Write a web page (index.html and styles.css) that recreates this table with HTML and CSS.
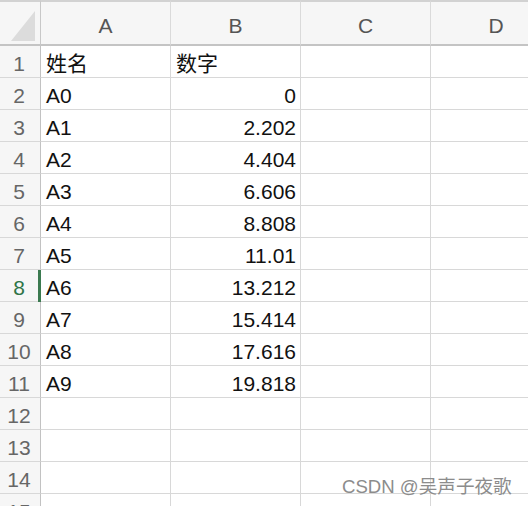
FILE: index.html
```html
<!DOCTYPE html>
<html lang="zh">
<head>
<meta charset="utf-8">
<link rel="stylesheet" href="styles.css">
</head>
<body>
<div class="sheet">
  <div class="corner"><svg width="40" height="44" viewBox="0 0 40 44"><polygon points="11,41 35,11 35,41" fill="#dcdcdc"/></svg></div>
  <div class="h">A</div><div class="h">B</div><div class="h">C</div><div class="h edge">D</div>

  <div class="r">1</div><div class="c">姓名</div><div class="c">数字</div><div class="c"></div><div class="c edge"></div>
  <div class="r">2</div><div class="c">A0</div><div class="c num">0</div><div class="c"></div><div class="c edge"></div>
  <div class="r">3</div><div class="c">A1</div><div class="c num">2.202</div><div class="c"></div><div class="c edge"></div>
  <div class="r">4</div><div class="c">A2</div><div class="c num">4.404</div><div class="c"></div><div class="c edge"></div>
  <div class="r">5</div><div class="c">A3</div><div class="c num">6.606</div><div class="c"></div><div class="c edge"></div>
  <div class="r">6</div><div class="c">A4</div><div class="c num">8.808</div><div class="c"></div><div class="c edge"></div>
  <div class="r">7</div><div class="c">A5</div><div class="c num">11.01</div><div class="c"></div><div class="c edge"></div>
  <div class="r sel">8</div><div class="c">A6</div><div class="c num">13.212</div><div class="c"></div><div class="c edge"></div>
  <div class="r">9</div><div class="c">A7</div><div class="c num">15.414</div><div class="c"></div><div class="c edge"></div>
  <div class="r">10</div><div class="c">A8</div><div class="c num">17.616</div><div class="c"></div><div class="c edge"></div>
  <div class="r">11</div><div class="c">A9</div><div class="c num">19.818</div><div class="c"></div><div class="c edge"></div>
  <div class="r">12</div><div class="c"></div><div class="c"></div><div class="c"></div><div class="c edge"></div>
  <div class="r">13</div><div class="c"></div><div class="c"></div><div class="c"></div><div class="c edge"></div>
  <div class="r">14</div><div class="c"></div><div class="c"></div><div class="c"></div><div class="c edge"></div>
  <div class="r">15</div><div class="c"></div><div class="c"></div><div class="c"></div><div class="c edge"></div>
</div>
<div class="watermark">CSDN @吴声子夜歌</div>
</body>
</html>
```

FILE: styles.css
```css
html, body {
  margin: 0;
  padding: 0;
  background: #ffffff;
}
body {
  width: 528px;
  height: 506px;
  overflow: hidden;
  position: relative;
  font-family: "Liberation Sans", "Noto Sans CJK SC", sans-serif;
}
.sheet {
  display: grid;
  width: 528px;
  grid-template-columns: 41px 130px 130px 130px 1fr;
  grid-template-rows: 46px;
  grid-auto-rows: 32px;
}
.corner, .h, .r, .c {
  box-sizing: border-box;
  display: flex;
  align-items: flex-end;
  font-size: 21px;
  line-height: 24px;
}
.corner {
  background: #f6f6f6;
  border-top: 2px solid #d2d2d2;
  border-bottom: 2px solid #c4c4c4;
  border-right: 1px solid #c8c8c8;
}
.corner svg {
  display: block;
}
.h {
  background: #f6f6f6;
  border-top: 2px solid #d2d2d2;
  border-bottom: 2px solid #c4c4c4;
  border-right: 1px solid #dadada;
  justify-content: center;
  color: #555555;
  padding-bottom: 6px;
}
.h.edge {
  padding-left: 33px;
}
.r {
  background: #f6f6f6;
  border-bottom: 1px solid #d8d8d8;
  border-right: 1px solid #c2c2c2;
  justify-content: center;
  color: #666666;
  padding: 0 2px 1px 0;
  position: relative;
}
.r.sel {
  color: #2f7547;
}
.r.sel::after {
  content: "";
  position: absolute;
  right: -1px;
  top: 0;
  bottom: -1px;
  width: 3px;
  background: #3b7a50;
}
.c {
  border-right: 1px solid #d8d8d8;
  border-bottom: 1px solid #d8d8d8;
  padding: 0 4px 1px 5px;
  color: #111111;
  white-space: nowrap;
}
.c.num {
  justify-content: flex-end;
}
.edge {
  border-right: none;
}
.watermark {
  position: absolute;
  left: 342px;
  top: 476px;
  font-size: 18.6px;
  line-height: 22px;
  color: #8c8c8c;
  white-space: nowrap;
}
```
